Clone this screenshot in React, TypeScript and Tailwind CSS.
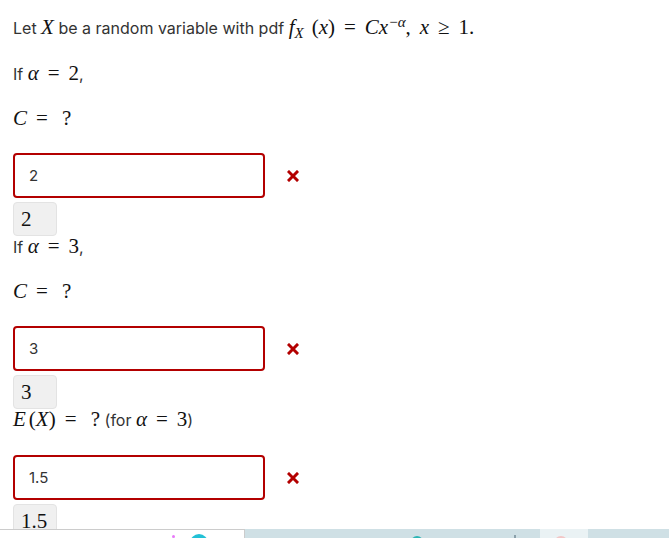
import React from 'react';

const serif = { fontFamily: '"Liberation Serif", "DejaVu Serif", serif' };

function M({ children }: { children: React.ReactNode }) {
  return (
    <span className="text-[21px] text-[#111] leading-[20px]" style={serif}>
      {children}
    </span>
  );
}

function I({ children }: { children: React.ReactNode }) {
  return <i className="italic">{children}</i>;
}

function Rel({ children }: { children: React.ReactNode }) {
  return <span className="mx-[9px]">{children}</span>;
}

function Cross() {
  return (
    <svg width="12" height="12" viewBox="0 0 12 12" className="shrink-0">
      <path d="M2 2 L10 10 M10 2 L2 10" stroke="#b30000" strokeWidth="3" strokeLinecap="square" />
    </svg>
  );
}

function Answer({ value, shown }: { value: string; shown: string }) {
  return (
    <div className="flex flex-col items-start">
      <div className="flex items-center gap-[22px]">
        <div className="w-[252px] h-[45px] border-2 border-[#b30000] rounded-[4px] flex items-center pl-[14px] text-[15px] text-[#333]">
          {value}
        </div>
        <Cross />
      </div>
      <div
        className="mt-[4px] h-[34px] px-[7px] min-w-[44px] flex items-center bg-[#f0f0f0] border border-[#e3e3e3] rounded-[4px] text-[21px] text-[#111]"
        style={serif}
      >
        {shown}
      </div>
    </div>
  );
}

export default function App() {
  return (
    <div
      className="relative w-[669px] h-[538px] overflow-hidden bg-white text-[16px] leading-[20px] text-[#333]"
      style={{ fontFamily: 'Inter, "Noto Sans", sans-serif' }}
    >
      <div className="px-[13px] pt-[17px] flex flex-col items-start">
        <p className="h-[20px] whitespace-nowrap">
          Let <M><I>X</I></M> be a random variable with pdf{' '}
          <M>
            <I>f</I>
            <sub className="text-[15px] italic">X</sub>
            <span className="ml-[8px]">(<I>x</I>)</span>
            <Rel>=</Rel>
            <I>C</I>
            <I>x</I>
            <sup className="text-[15px] ml-[1px]">
              −<I>α</I>
            </sup>
            <span className="mr-[9px]">,</span>
            <I>x</I>
            <Rel>≥</Rel>1.
          </M>
        </p>

        <p className="mt-[26px] h-[20px] whitespace-nowrap">
          If <M><I>α</I><Rel>=</Rel>2</M>,
        </p>
        <p className="mt-[25px] h-[20px] whitespace-nowrap">
          <M><I>C</I><Rel>=</Rel>&nbsp;?</M>
        </p>
        <div className="mt-[25px]">
          <Answer value="2" shown="2" />
        </div>

        <p className="h-[20px] whitespace-nowrap">
          If <M><I>α</I><Rel>=</Rel>3</M>,
        </p>
        <p className="mt-[25px] h-[20px] whitespace-nowrap">
          <M><I>C</I><Rel>=</Rel>&nbsp;?</M>
        </p>
        <div className="mt-[25px]">
          <Answer value="3" shown="3" />
        </div>

        <p className="h-[22px] whitespace-nowrap">
          <M>
            <I>E</I>
            <span className="ml-[3px]">(<I>X</I>)</span>
            <Rel>=</Rel>&nbsp;?
          </M>{' '}
          (for <M><I>α</I><Rel>=</Rel>3</M>)
        </p>
        <div className="mt-[24px]">
          <Answer value="1.5" shown="1.5" />
        </div>
      </div>

      {/* bottom overlay bar */}
      <div className="absolute left-0 right-0 top-[529px] h-[20px] flex">
        <div className="relative w-[245px] h-full bg-white border-t border-r border-[#cccccc]">
          <span className="absolute left-[172px] top-[5px] w-[3px] h-[3px] rounded-full bg-[#e879f9]" />
          <span className="absolute left-[190px] top-[4px] w-[18px] h-[18px] rounded-full bg-[#22c1d6]" />
        </div>
        <div className="relative flex-1 h-full bg-[#cfe0e5]">
          <span className="absolute left-[166px] top-[7px] w-[12px] h-[12px] rounded-full bg-[#2bb5b5]" />
          <span className="absolute left-[269px] top-[6px] w-[2px] h-[4px] bg-[#8aa0aa]" />
          <div className="absolute left-[295px] top-0 w-[48px] h-full bg-[#eaf2f4]">
            <span className="absolute left-[14px] top-[7px] w-[14px] h-[14px] rounded-full bg-[#f2c6c6]" />
          </div>
        </div>
      </div>
    </div>
  );
}
